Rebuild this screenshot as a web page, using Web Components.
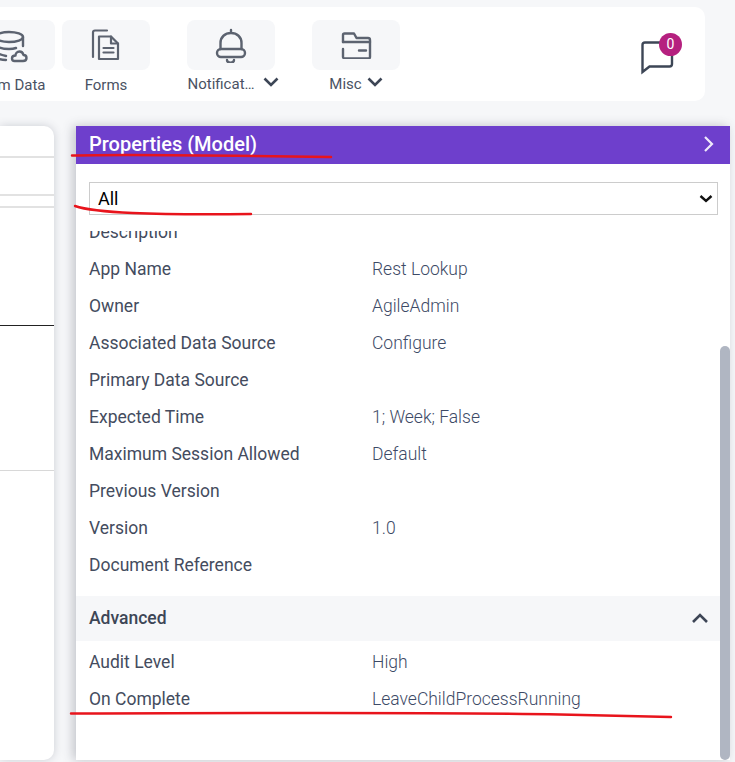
<!DOCTYPE html>
<html>
<head>
<meta charset="utf-8">
<style>
  html, body { margin: 0; height: 100%; }
  body {
    width: 735px;
    height: 762px;
    overflow: hidden;
    position: relative;
    background: #f6f7f9;
    font-family: Roboto, "Liberation Sans", sans-serif;
  }
</style>
</head>
<body>
<app-page>
  <tool-bar slot="bar">
    <tool-tile label="Custom Data" style="--label-right: 18px">
      <svg width="44" height="36" viewBox="0 0 44 36" fill="none" stroke="#5c6370" stroke-width="2.400" stroke-linecap="round" stroke-linejoin="round">
        <ellipse cx="20" cy="10" rx="14" ry="5"/>
        <path d="M6 10v19c0 2 4 3.500 11 4M34 10v9M6 17c2 3.500 8 5 14 5 3 0 5-.3 7-1M6 24c2 3 6 4 11 5"/>
        <path d="M26 34h8c2.500 0 3.500-1.500 3.500-3 0-2-1.500-3-3-3-.5-2-2-3.500-4-3.500-2.500 0-4 2-4 4-2 0-3.500 1-3.500 2.700 0 1.800 1.200 2.800 2.500 2.800z"/>
      </svg>
    </tool-tile>
    <tool-tile label="Forms">
      <svg width="30" height="34" viewBox="0 0 30 34" fill="none" stroke="#5c6370" stroke-width="2.200" stroke-linecap="round" stroke-linejoin="round">
        <path d="M16 2.500H4C2.800 2.500 2 3.300 2 4.500V29"/>
        <path d="M8 8.500h12l7 7V31H8z"/>
        <path d="M20 8.500V15.500h7M12.500 20h10M12.500 24.500h10"/>
      </svg>
    </tool-tile>
    <tool-tile label="Notifications" menu="1" style="--label-left: 4px">
      <svg width="32" height="36" viewBox="0 0 32 36" fill="none" stroke="#5c6370" stroke-width="2.400" stroke-linecap="round" stroke-linejoin="round">
        <path d="M16 3v3M5.500 22V16C5.500 10 10 6 16 6s10.500 4 10.500 10v6"/>
        <rect x="2" y="22" width="28" height="8" rx="4"/>
        <path d="M12 33c0 3.500 7 3.500 7 0"/>
      </svg>
    </tool-tile>
    <tool-tile label="Misc" menu="1">
      <svg width="32" height="28" viewBox="0 0 32 28" fill="none" stroke="#5c6370" stroke-width="2.400" stroke-linecap="round" stroke-linejoin="round">
        <path d="M3 11V4c0-1 .8-1.500 1.500-1.500H14l2.500 4.500h11.500c1 0 2 .8 2 2v17c0 1-1 1.500-2 1.500H5c-1 0-2-.5-2-1.500v-8"/>
        <path d="M3 11h27M19 19.500h7"/>
      </svg>
    </tool-tile>
    <chat-badge count="0"></chat-badge>
  </tool-bar>

  <side-card slot="left"></side-card>

  <props-panel slot="right" heading="Properties (Model)">
    <prop-row name="App Name" value="Rest Lookup"></prop-row>
    <prop-row name="Owner" value="AgileAdmin"></prop-row>
    <prop-row name="Associated Data Source" value="Configure"></prop-row>
    <prop-row name="Primary Data Source"></prop-row>
    <prop-row name="Expected Time" value="1; Week; False"></prop-row>
    <prop-row name="Maximum Session Allowed" value="Default"></prop-row>
    <prop-row name="Previous Version"></prop-row>
    <prop-row name="Version" value="1.0"></prop-row>
    <prop-row name="Document Reference"></prop-row>
    <prop-section heading="Advanced"></prop-section>
    <prop-row name="Audit Level" value="High"></prop-row>
    <prop-row name="On Complete" value="LeaveChildProcessRunning"></prop-row>
  </props-panel>
</app-page>
<red-marks></red-marks>

<script>
class AppPage extends HTMLElement {
  constructor() {
    super();
    this.attachShadow({ mode: "open" }).innerHTML = `
      <style>
        :host { display: block; height: 762px; overflow: hidden; padding-top: 7px; box-sizing: border-box; }
        .main { display: flex; gap: 22px; margin-top: 25px; height: 634px; }
      </style>
      <slot name="bar"></slot>
      <div class="main">
        <slot name="left"></slot>
        <slot name="right"></slot>
      </div>`;
  }
}

class ToolBar extends HTMLElement {
  constructor() {
    super();
    this.attachShadow({ mode: "open" }).innerHTML = `
      <style>
        :host {
          display: flex;
          width: 738px;
          height: 94px;
          margin-left: -33px;
          padding-top: 13px;
          box-sizing: border-box;
          background: #fff;
          border-radius: 10px;
        }
      </style>
      <slot></slot>`;
  }
}

class ToolTile extends HTMLElement {
  constructor() {
    super();
    this.attachShadow({ mode: "open" });
  }

  connectedCallback() {
    const menu = this.hasAttribute("menu");
    this.shadowRoot.innerHTML = `
      <style>
        :host { display: block; width: 88px; flex: none; margin-right: 7px; color: #4a5263; font-size: 15px; }
        :host([menu]) { margin-left: 30px; margin-right: 7px; }
        .box {
          height: 50px;
          background: #f6f7f9;
          border-radius: 8px;
          display: flex;
          align-items: center;
          justify-content: center;
        }
        .label {
          display: flex;
          justify-content: center;
          align-items: center;
          gap: 5px;
          margin-top: 6px;
          height: 18px;
          padding: 0 var(--label-right, 0) 0 var(--label-left, 0);
          white-space: nowrap;
          line-height: 18px;
        }
        .text { flex: none; }
        :host([menu]) .label { margin-top: 5px; }
        :host([menu]) .text { max-width: 70px; overflow: hidden; text-overflow: ellipsis; }
        .chev { flex: none; margin-top: -5px; }
      </style>
      <div class="box"><slot></slot></div>
      <div class="label">
        <span class="text">${this.getAttribute("label")}</span>
        ${menu ? `<svg class="chev" width="16" height="10" viewBox="0 0 16 10" fill="none" stroke="#3d4656" stroke-width="2.600"><path d="M1.500 1.500L8 8l6.500-6.500"/></svg>` : ""}
      </div>`;
  }
}

class ChatBadge extends HTMLElement {
  constructor() {
    super();
    this.attachShadow({ mode: "open" });
  }

  connectedCallback() {
    this.shadowRoot.innerHTML = `
      <style>
        :host { display: block; position: relative; flex: none; width: 42px; height: 44px; margin-left: 234px; margin-top: 13px; }
        svg { display: block; margin-top: 8px; }
        .count {
          position: absolute;
          left: 18px;
          top: 0;
          width: 23px;
          height: 23px;
          border-radius: 50%;
          background: #b5207f;
          color: #fff;
          font-size: 14px;
          line-height: 23px;
          text-align: center;
        }
      </style>
      <svg width="34" height="34" viewBox="0 0 34 34" fill="none" stroke="#3d4656" stroke-width="2.400">
        <path d="M20 1.500H4C2.500 1.500 1.500 2.500 1.500 4V31L8.500 25.500H28.500C30 25.500 31 24.500 31 23V14"/>
      </svg>
      <span class="count">${this.getAttribute("count")}</span>`;
  }
}

class SideCard extends HTMLElement {
  constructor() {
    super();
    this.attachShadow({ mode: "open" }).innerHTML = `
      <style>
        :host {
          display: block;
          flex: none;
          width: 54px;
          height: 634px;
          background: #fff;
          border-radius: 0 10px 10px 0;
          box-shadow: 0 0 10px rgba(60,64,80,.22);
          box-sizing: border-box;
          padding-top: 30px;
        }
        div { border-top: 2px solid #e2e2e2; }
        .a { height: 36px; }
        .b { height: 10px; }
        .c { height: 117px; }
        .d { height: 144px; border-top: 1px solid #222; }
        .e { border-top: 1px solid #d8d8d8; }
      </style>
      <div class="a"></div>
      <div class="b"></div>
      <div class="c"></div>
      <div class="d"></div>
      <div class="e"></div>`;
  }
}

class PropsPanel extends HTMLElement {
  constructor() {
    super();
    this.attachShadow({ mode: "open" });
  }

  connectedCallback() {
    this.shadowRoot.innerHTML = `
      <style>
        :host {
          display: flex;
          flex-direction: column;
          flex: none;
          width: 654px;
          height: 634px;
          background: #fff;
          box-shadow: -3px 0 10px rgba(60,64,80,.28);
        }
        header {
          flex: none;
          height: 38px;
          padding: 0 15px 2px 13px;
          box-sizing: border-box;
          background: #6e3fcc;
          color: #fff;
          display: flex;
          align-items: center;
          justify-content: space-between;
          font-size: 20px;
          font-weight: 500;
        }
        .filter { flex: none; position: relative; padding: 18px 12px 16px 13px; }
        select {
          display: block;
          width: 629px;
          height: 33px;
          padding-left: 8px;
          border: 1px solid #ccc;
          border-radius: 0;
          background: #fff;
          color: #000;
          font: 18px Roboto, sans-serif;
          appearance: none;
        }
        .arrow { position: absolute; left: 623px; top: 31px; pointer-events: none; }
        .body { flex: 1; min-height: 0; display: flex; }
        .list { flex: 1; min-width: 0; overflow: hidden; }
        .inner { margin-top: -18px; }
        .track { flex: none; width: 10px; }
        .thumb { margin-top: 115px; height: 414px; background: #b0b6c2; border-radius: 5px; }
      </style>
      <header>
        <span>${this.getAttribute("heading")}</span>
        <svg width="12" height="18" viewBox="0 0 12 18" fill="none" stroke="#efe9fa" stroke-width="2.200"><path d="M2 2l7 7-7 7"/></svg>
      </header>
      <div class="filter">
        <select><option>All</option></select>
        <svg class="arrow" width="14" height="8" viewBox="0 0 14 8" fill="none" stroke="#111" stroke-width="2.400"><path d="M1.500 1l5.500 5 5.500-5"/></svg>
      </div>
      <div class="body">
        <div class="list"><div class="inner">
          <prop-row name="Description"></prop-row>
          <slot></slot>
        </div></div>
        <div class="track"><div class="thumb"></div></div>
      </div>`;
  }
}

class PropRow extends HTMLElement {
  constructor() {
    super();
    this.attachShadow({ mode: "open" });
  }

  connectedCallback() {
    this.shadowRoot.innerHTML = `
      <style>
        :host { display: flex; height: 37px; align-items: center; padding-left: 13px; font-size: 17.500px; white-space: nowrap; color: #444c5e; }
        .name { width: 283px; flex: none; }
        .value { font-weight: 300; color: #3d4a66; }
      </style>
      <span class="name">${this.getAttribute("name")}</span>
      <span class="value">${this.getAttribute("value") || ""}</span>`;
  }
}

class PropSection extends HTMLElement {
  constructor() {
    super();
    this.attachShadow({ mode: "open" });
  }

  connectedCallback() {
    this.shadowRoot.innerHTML = `
      <style>
        :host {
          display: flex;
          height: 45px;
          box-sizing: border-box;
          margin: 13px 0 2px;
          padding: 0 11px 2px 13px;
          align-items: center;
          justify-content: space-between;
          background: #f6f7f9;
          color: #3d4656;
          font-size: 17.500px;
          font-weight: 500;
        }
      </style>
      <span>${this.getAttribute("heading")}</span>
      <svg width="18" height="12" viewBox="0 0 18 12" fill="none" stroke="#3d4656" stroke-width="2.600"><path d="M2 10l7-7 7 7"/></svg>`;
  }
}

class RedMarks extends HTMLElement {
  constructor() {
    super();
    this.attachShadow({ mode: "open" }).innerHTML = `
      <style>
        :host { display: block; position: absolute; left: 0; top: 0; pointer-events: none; }
        svg { display: block; }
      </style>
      <svg width="735" height="762" fill="none" stroke="#e8141c" stroke-width="2.400" stroke-linecap="round" stroke-linejoin="round">
        <path d="M72 155.500C130 154 200 155 331 157"/>
        <path d="M75 206C95 213 150 215 251 214"/>
        <path d="M71 713.500C200 713 450 712 560 714.500L671 717"/>
      </svg>`;
  }
}

customElements.define("app-page", AppPage);
customElements.define("tool-bar", ToolBar);
customElements.define("tool-tile", ToolTile);
customElements.define("chat-badge", ChatBadge);
customElements.define("side-card", SideCard);
customElements.define("props-panel", PropsPanel);
customElements.define("prop-row", PropRow);
customElements.define("prop-section", PropSection);
customElements.define("red-marks", RedMarks);
</script>
</body>
</html>
